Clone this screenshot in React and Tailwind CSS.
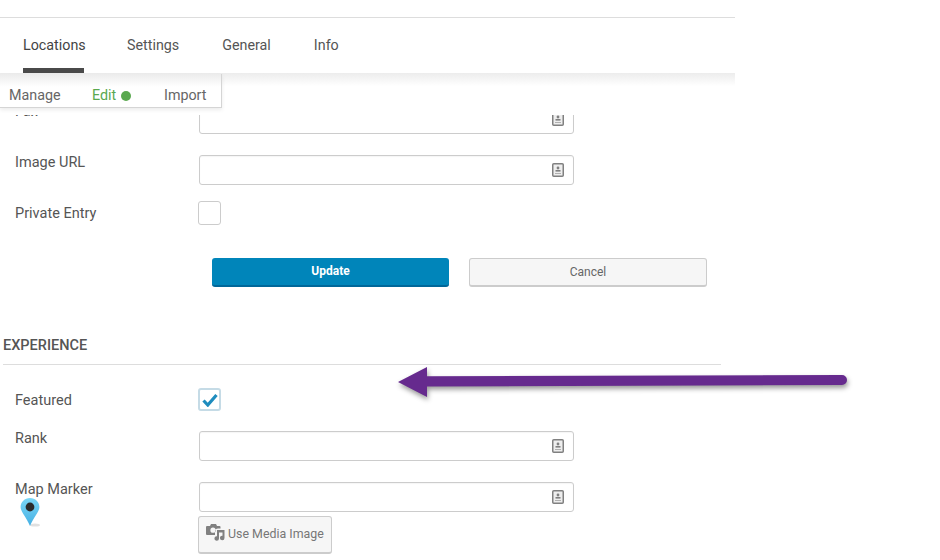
const TABS = ['Locations', 'Settings', 'General', 'Info']

function ContactIcon() {
  return (
    <svg width="12" height="14" viewBox="0 0 12 14" className="absolute right-[9px] top-1/2 -translate-y-1/2">
      <rect x="0.75" y="0.75" width="10.5" height="12.5" rx="1" fill="#eee" stroke="#808080" strokeWidth="1.5" />
      <circle cx="6" cy="5" r="1.4" fill="#808080" />
      <rect x="3.5" y="7" width="5" height="1.6" fill="#808080" />
      <rect x="3" y="10" width="6" height="1" fill="#b0b0b0" />
    </svg>
  )
}

function TextInput() {
  return (
    <div className="relative w-[375px] h-[30px] rounded-[3px] border border-[#ccc] bg-white shadow-[inset_0_1px_1px_rgba(0,0,0,0.04)]">
      <ContactIcon />
    </div>
  )
}

function Field({ label, className = '', labelClass = '', children }) {
  return (
    <div className={`flex ${className}`}>
      <div className={`w-[199px] pl-[15px] text-[14.5px] leading-[16px] text-[#555] ${labelClass}`}>{label}</div>
      <div>{children}</div>
    </div>
  )
}

function MapPin() {
  return (
    <svg width="24" height="32" viewBox="0 0 24 32" className="ml-[18px] -mt-[1px]">
      <defs>
        <linearGradient id="pin" x1="0" y1="0" x2="0" y2="1">
          <stop offset="0" stopColor="#7bd6f5" />
          <stop offset="1" stopColor="#45b0e4" />
        </linearGradient>
      </defs>
      <ellipse cx="17" cy="28" rx="5" ry="1.6" fill="#000" opacity="0.12" />
      <path d="M12 1C6.6 1 2.6 5 2.6 10c0 4.6 5.6 10 9.4 19 3.8-9 9.4-14.4 9.4-19C21.4 5 17.4 1 12 1z" fill="url(#pin)" />
      <circle cx="12" cy="10" r="4.4" fill="#2b2b2b" />
    </svg>
  )
}

function MediaIcon() {
  return (
    <svg width="19" height="18" viewBox="0 0 19 18" className="-mt-[5px]">
      <path d="M1 3h3l1-2h5l1 2h2.5a1 1 0 0 1 1 1v1.5H12a3 3 0 0 0-3 3V12H1a1 1 0 0 1-1-1V4a1 1 0 0 1 1-1z M7 4.6a2.6 2.6 0 1 0 0 5.2 2.6 2.6 0 0 0 0-5.2z" fill="#808080" fillRule="evenodd" />
      <path d="M11 7h7.5v8a2.3 2.3 0 1 1-2-2.3V9.5h-3.5V15.5a2.3 2.3 0 1 1-2-2.3z" fill="#808080" />
    </svg>
  )
}

function Arrow() {
  return (
    <svg width="460" height="44" viewBox="0 0 460 44" className="absolute left-[392px] top-[360px]" style={{ filter: 'drop-shadow(1px 3px 2.5px rgba(0,0,0,0.4))' }}>
      <path d="M6 22 35 7v9.3L450 15a5 5 0 0 1 0 10L35 26.5V37z" fill="#662a8e" />
    </svg>
  )
}

export default function App() {
  return (
    <div className="relative w-[940px] h-[560px] overflow-hidden bg-white pt-[17px] font-['Roboto','Liberation_Sans',sans-serif]">
      {/* tab bar, its white fade hides the top of the scrolled form */}
      <div className="relative z-10 w-[735px] h-[57px] border-y border-t-[#ddd] border-b-[#bbb] bg-white">
        <div className="flex gap-[43px] pl-[23px] h-full">
          {TABS.map((t, i) => (
            <div key={t} className={`h-full pt-[17px] text-[14.3px] leading-[20px] whitespace-nowrap ${i === 0 ? 'w-[61px] border-b-[5px] border-[#4a4a4a] text-[#444]' : 'text-[#555]'}`}>
              {t}
            </div>
          ))}
        </div>
        <div className="absolute left-0 top-full w-full h-[42px] bg-[linear-gradient(#ececec,#fff_13px)]" />
      </div>

      {/* sub menu over the form */}
      <div className="absolute left-0 top-[74px] z-20 w-[222px] h-[34px] flex items-center pl-[9px] pt-[10px] text-[14.3px] text-[#666] bg-[linear-gradient(#ececec,#fff_13px)] border-r border-b border-[#d5d5d5] shadow-[0_2px_4px_rgba(0,0,0,0.08)]">
        <span className="w-[83px]">Manage</span>
        <span className="w-[72px] flex items-center text-[#5aa84f]">
          Edit
          <span className="ml-[5px] w-[10px] h-[10px] rounded-full bg-[#5aa84f]" />
        </span>
        <span>Import</span>
      </div>

      {/* form */}
      <div className="pt-[30px] w-[735px]">
        <Field label="Fax">
          <TextInput />
        </Field>
        <Field label="Image URL" className="mt-[21px]">
          <TextInput />
        </Field>
        <Field label="Private Entry" className="mt-[16px] items-center" labelClass="pt-[2px]">
          <div className="-ml-[1px] w-[23px] h-[24px] rounded-[3px] border border-[#ccc] bg-white" />
        </Field>
        <div className="flex gap-[20px] pl-[212px] mt-[33px]">
          <button className="w-[237px] h-[29px] pb-[1px] rounded-[3px] bg-[#0085ba] border-b-2 border-[#006799] text-white text-[12px] font-bold">Update</button>
          <button className="w-[238px] h-[29px] pb-[1px] rounded-[3px] bg-[#f6f6f6] border border-[#ccc] border-b-2 text-[#666] text-[12px]">Cancel</button>
        </div>

        <div className="mt-[50px] ml-[3px] w-[718px] h-[28px] border-b border-[#ddd] text-[14.5px] leading-[17px] font-medium text-[#555]">EXPERIENCE</div>

        <Field label="Featured" className="mt-[23px] items-center" labelClass="pt-[2px]">
          <div className="-ml-[1px] w-[23px] h-[23px] rounded-[3px] border-2 border-[#c5dbe6] bg-white flex items-center justify-center">
            <svg width="16" height="14" viewBox="0 0 16 14">
              <path d="M1.5 7.5 5.8 12 14.5 2" fill="none" stroke="#1e8cbe" strokeWidth="3.2" />
            </svg>
          </div>
        </Field>
        <Field label="Rank" className="mt-[20px]">
          <TextInput />
        </Field>
        <div className="flex mt-[21px]">
          <div className="w-[199px]">
            <div className="pl-[15px] text-[14.5px] leading-[16px] text-[#555]">Map Marker</div>
            <MapPin />
          </div>
          <div>
            <TextInput />
            <button className="-ml-[1px] mt-[4px] w-[134px] h-[38px] rounded-[3px] bg-[#f6f6f6] border border-[#ccc] border-b-2 flex items-center gap-[3px] pl-[7px] text-[12.4px] text-[#777]">
              <MediaIcon />
              Use Media Image
            </button>
          </div>
        </div>
      </div>

      <Arrow />
    </div>
  )
}
